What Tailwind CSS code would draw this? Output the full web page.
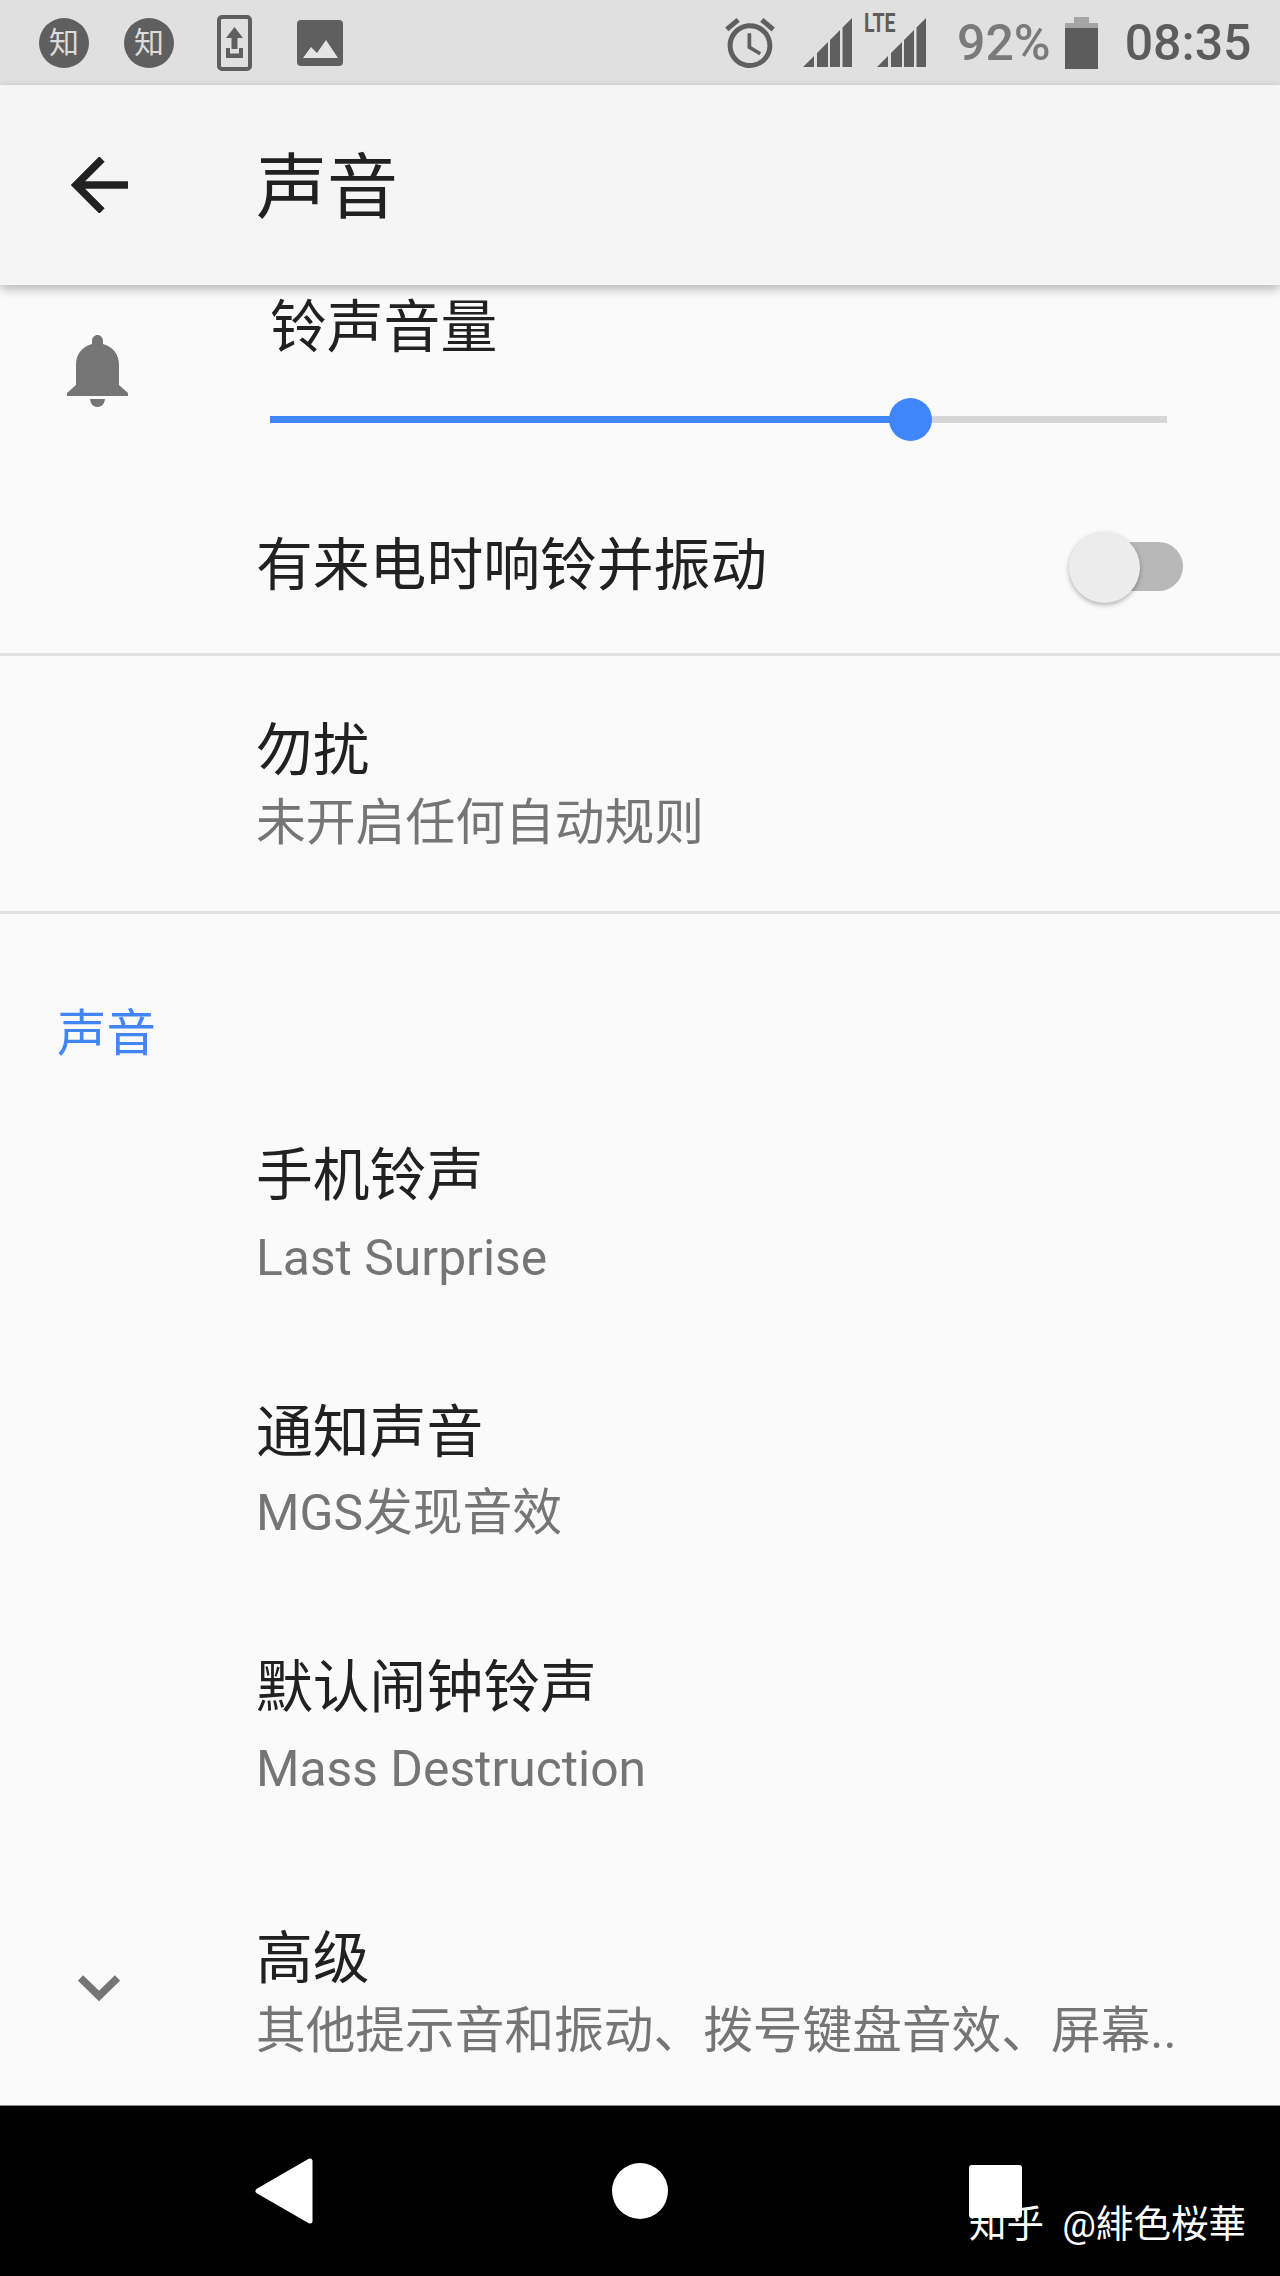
<!DOCTYPE html>
<html lang="zh-CN">
<head>
  <meta charset="UTF-8">
  <title>声音</title>
  <script src="https://cdn.jsdelivr.net/npm/@tailwindcss/browser@4"></script>
</head>
<body class="bg-[#fafafa]">
  <div class="w-[1280px] h-[2276px] flex flex-col overflow-hidden font-['Roboto','Noto_Sans_CJK_SC',sans-serif] text-[#212121]">

    <!-- Status bar -->
    <div class="h-[85px] shrink-0 bg-[#e0e0e0] flex items-center text-[#5c5c5c]">
      <div class="ml-[39px] w-[50px] h-[50px] rounded-full bg-[#5f5f5f] text-[#dcdcdc] text-[30px] leading-[50px] text-center">知</div>
      <div class="ml-[35px] w-[50px] h-[50px] rounded-full bg-[#5f5f5f] text-[#dcdcdc] text-[30px] leading-[50px] text-center">知</div>
      <svg class="ml-[43px]" width="35" height="56" viewBox="0 0 35 56">
        <rect x="2" y="2" width="31" height="52" rx="3" fill="none" stroke="#5f5f5f" stroke-width="4"/>
        <path d="M17.5 12 L26 23 H20.5 V34 H14.5 V23 H9 Z" fill="#5f5f5f"/>
        <path d="M9 33 V43 H26 V33 H22 V38.5 H13 V33 Z" fill="#5f5f5f"/>
      </svg>
      <svg class="ml-[45px]" width="46" height="46" viewBox="0 0 46 46">
        <rect width="46" height="46" rx="4" fill="#5f5f5f"/>
        <path d="M6 38 L14 27 L20 33 L29 20 L41 38 Z" fill="#e4e4e4"/>
      </svg>

      <svg class="ml-[382px]" width="50" height="50" viewBox="2 1.86 20 20.14">
        <path fill="#5f5f5f" d="M22 5.72l-4.6-3.86-1.29 1.53 4.6 3.86L22 5.72zM7.88 3.39L6.6 1.86 2 5.71l1.29 1.53 4.59-3.85zM12.5 8H11v6l4.75 2.85.75-1.23-4-2.37V8zM12 4c-4.97 0-9 4.03-9 9s4.03 9 9 9 9-4.03 9-9-4.03-9-9-9zm0 16c-3.87 0-7-3.13-7-7s3.13-7 7-7 7 3.13 7 7-3.13 7-7 7z"/>
      </svg>
      <svg class="ml-[28px]" width="49" height="49" viewBox="0 0 49 49">
        <path fill="#5f5f5f" d="M0 49 L11 38 V49 Z M14 35 L25 24 V49 H14 Z M27 22 L37 12 V49 H27 Z M39.5 9.5 L49 0 V49 H39.5 Z"/>
      </svg>
      <div class="relative ml-[25px] w-[49px] h-[49px]">
        <svg class="absolute left-0 top-0" width="49" height="49" viewBox="0 0 49 49">
          <path fill="#5f5f5f" d="M0 49 L11 38 V49 Z M14 35 L25 24 V49 H14 Z M27 22 L37 12 V49 H27 Z M39.5 9.5 L49 0 V49 H39.5 Z"/>
        </svg>
        <span class="absolute left-[-13px] top-[-7px] text-[25px] leading-[26px] font-bold scale-x-[0.78] origin-left">LTE</span>
      </div>
      <span class="ml-[31px] text-[50px] leading-none font-medium text-[#7a7a7a]">92%</span>
      <svg class="ml-[14px]" width="33" height="52" viewBox="0 0 33 52">
        <path fill="#a5a5a5" d="M9 0 H24 V6 H33 V12 H0 V6 H9 Z"/>
        <rect y="11" width="33" height="41" fill="#5c5c5c"/>
      </svg>
      <span class="ml-[27px] text-[50px] leading-none font-medium">08:35</span>
    </div>

    <!-- App bar -->
    <div class="relative z-10 h-[200px] shrink-0 bg-[#f5f5f5] shadow-[0_4px_10px_rgba(0,0,0,0.28)] flex items-center">
      <svg class="ml-[71px]" width="58" height="56" viewBox="0 0 58 56">
        <path d="M57 28 H6 M31 2 L5 28 L31 54" fill="none" stroke="#212121" stroke-width="7.5"/>
      </svg>
      <span class="ml-[127px] mt-[4px] text-[71px] leading-none">声音</span>
    </div>

    <!-- Settings list -->
    <div class="flex-1 min-h-0 overflow-hidden flex flex-col">
      <!-- Ringer volume -->
      <div class="flex h-[371px] shrink-0 border-b-[3px] border-[#e2e2e2]">
        <div class="w-[258px] shrink-0 pt-[50px] pl-[67px]">
          <svg width="61" height="72" viewBox="0 0 61 72">
            <path fill="#757575" d="M0 61 V58 L9 50 V30 C9 19 15 12 25 9 V6 C25 2.5 27.5 0 30.5 0 S36 2.5 36 6 V9 C46 12 52 19 52 30 V50 L61 58 V61 Z M23 64 H38 C37.5 69 34.5 72 30.5 72 S23.5 69 23 64 Z"/>
          </svg>
        </div>
        <div class="flex-1 flex flex-col">
          <div class="pl-[12px] pt-[8px] text-[56.8px] leading-[70px]">铃声音量</div>
          <div class="relative ml-[12px] mt-[53px] w-[897px] h-[7px] bg-[#d6d6d6]">
            <div class="h-[7px] w-[625px] bg-[#3f86fb]"></div>
            <div class="absolute left-[619px] top-[-18px] w-[43px] h-[43px] rounded-full bg-[#3f86fb]"></div>
          </div>
          <div class="flex items-center justify-between mt-[105px] -ml-[2px]">
            <span class="text-[56.8px] leading-[70px]">有来电时响铃并振动</span>
            <div class="relative mr-[97px] w-[114px] h-[71px] mt-[4px]">
              <div class="absolute right-0 top-[10px] w-[90px] h-[49px] rounded-full bg-[#b8b8b8]"></div>
              <div class="absolute left-0 top-0 w-[71px] h-[71px] rounded-full bg-[#ececec] shadow-[0_2px_5px_rgba(0,0,0,0.3)]"></div>
            </div>
          </div>
        </div>
      </div>

      <!-- Do not disturb -->
      <div class="h-[258px] shrink-0 pl-[256px] pt-[58px] border-b-[3px] border-[#e2e2e2]">
        <div class="text-[56.8px] leading-[73px]">勿扰</div>
        <div class="text-[49.8px] leading-[73px] text-[#757575]">未开启任何自动规则</div>
      </div>

      <!-- Sound section -->
      <div class="mt-[90px] pl-[57px] text-[49.5px] leading-[60px] text-[#4285f4]">声音</div>

      <div class="mt-[71px] pl-[256px]">
        <div class="text-[56.8px] leading-[82px]">手机铃声</div>
        <div class="text-[49.8px] leading-[82px] text-[#757575]">Last Surprise</div>
      </div>
      <div class="mt-[93px] pl-[256px]">
        <div class="text-[56.8px] leading-[81px]">通知声音</div>
        <div class="text-[49.8px] leading-[81px] text-[#757575]">MGS发现音效</div>
      </div>
      <div class="mt-[93px] pl-[256px]">
        <div class="text-[56.8px] leading-[82px]">默认闹钟铃声</div>
        <div class="text-[49.8px] leading-[81px] text-[#757575]">Mass Destruction</div>
      </div>
      <div class="mt-[113px] flex">
        <div class="w-[256px] shrink-0 pl-[78px] pt-[52px]">
          <svg width="42" height="26" viewBox="0 0 42 26">
            <path d="M2.5 3 L21 21 L39.5 3" fill="none" stroke="#757575" stroke-width="7.5"/>
          </svg>
        </div>
        <div>
          <div class="text-[56.8px] leading-[72px]">高级</div>
          <div class="text-[49.7px] leading-[72px] text-[#757575] whitespace-nowrap">其他提示音和振动、拨号键盘音效、屏幕..</div>
        </div>
      </div>
    </div>

    <!-- Navigation bar -->
    <div class="relative z-10 h-[171px] shrink-0 bg-black border-t border-[#8a8a8a] flex items-center">
      <svg class="ml-[255px]" width="58" height="66" viewBox="0 0 58 66">
        <path d="M55 3 V63 L3 33 Z" fill="#fff" stroke="#fff" stroke-width="5" stroke-linejoin="round"/>
      </svg>
      <div class="ml-[299px] w-[56px] h-[56px] rounded-full bg-white"></div>
      <div class="ml-[301px] w-[53px] h-[53px] rounded-[3px] bg-white"></div>
      <div class="absolute left-[969px] top-[92px] text-[37.5px] leading-[52px] text-white whitespace-pre [word-spacing:9px]">知乎 @緋色桜華</div>
    </div>
  </div>
</body>
</html>
